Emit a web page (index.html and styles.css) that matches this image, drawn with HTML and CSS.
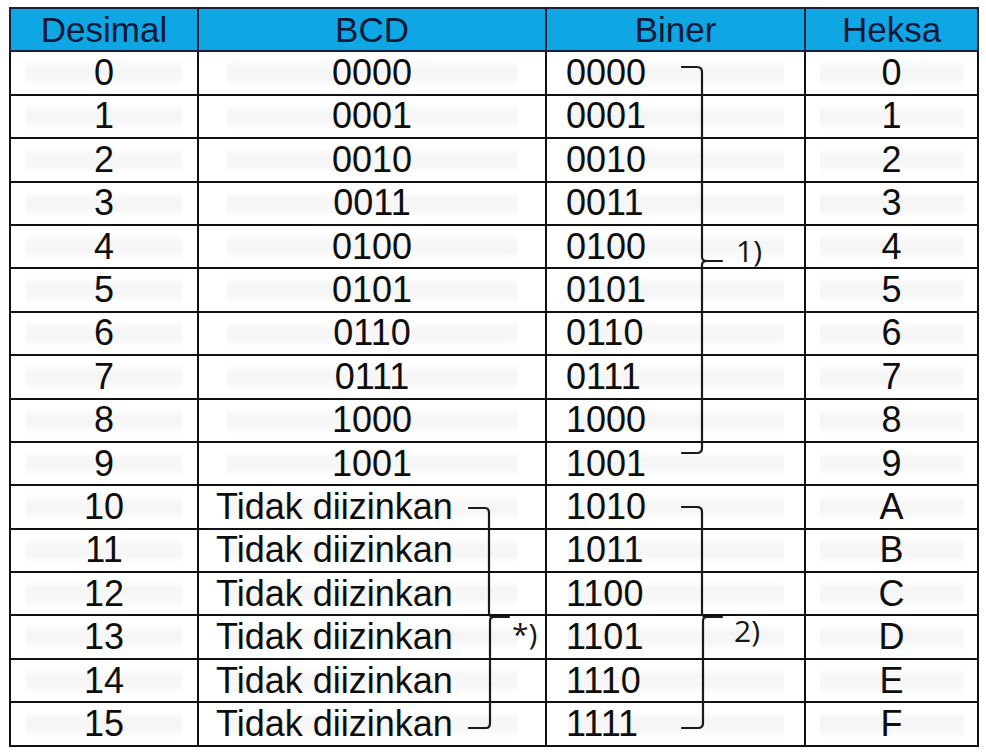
FILE: index.html
```html
<!DOCTYPE html>
<html lang="id">
<head>
<meta charset="utf-8">
<title>Desimal BCD Biner Heksa</title>
<link rel="stylesheet" href="styles.css">
</head>
<body>
<div class="sheet">
  <table class="conv">
    <colgroup>
      <col class="c-dec"><col class="c-bcd"><col class="c-bin"><col class="c-hex">
    </colgroup>
    <thead>
      <tr><th>Desimal</th><th>BCD</th><th>Biner</th><th>Heksa</th></tr>
    </thead>
    <tbody>
      <tr><td>0</td><td>0000</td><td class="bin">0000</td><td>0</td></tr>
      <tr><td>1</td><td>0001</td><td class="bin">0001</td><td>1</td></tr>
      <tr><td>2</td><td>0010</td><td class="bin">0010</td><td>2</td></tr>
      <tr><td>3</td><td>0011</td><td class="bin">0011</td><td>3</td></tr>
      <tr><td>4</td><td>0100</td><td class="bin">0100</td><td>4</td></tr>
      <tr><td>5</td><td>0101</td><td class="bin">0101</td><td>5</td></tr>
      <tr><td>6</td><td>0110</td><td class="bin">0110</td><td>6</td></tr>
      <tr><td>7</td><td>0111</td><td class="bin">0111</td><td>7</td></tr>
      <tr><td>8</td><td>1000</td><td class="bin">1000</td><td>8</td></tr>
      <tr><td>9</td><td>1001</td><td class="bin">1001</td><td>9</td></tr>
      <tr><td>10</td><td class="na">Tidak diizinkan</td><td class="bin">1010</td><td>A</td></tr>
      <tr><td>11</td><td class="na">Tidak diizinkan</td><td class="bin">1011</td><td>B</td></tr>
      <tr><td>12</td><td class="na">Tidak diizinkan</td><td class="bin">1100</td><td>C</td></tr>
      <tr><td>13</td><td class="na">Tidak diizinkan</td><td class="bin">1101</td><td>D</td></tr>
      <tr><td>14</td><td class="na">Tidak diizinkan</td><td class="bin">1110</td><td>E</td></tr>
      <tr><td>15</td><td class="na">Tidak diizinkan</td><td class="bin">1111</td><td>F</td></tr>
    </tbody>
  </table>
  <svg class="braces" width="986" height="754" viewBox="0 0 986 754" aria-hidden="true">
    <g fill="none" stroke="#1a1a1a" stroke-width="2.2" stroke-linecap="round" stroke-linejoin="round">
      <path d="M682 67 L697 67 Q702 67 702 72 L702 257 Q702 261 707 261 L722 261 M707 261 Q702 261 702 265 L702 448 Q702 453 697 453 L682 453"/>
      <path d="M682 507 L697 507 Q702 507 702 512 L702 613 Q702 617 707 617 L722 617 M707 617 Q703 617 703 621 L703 723 Q703 728 698 728 L682 728"/>
      <path d="M469 508 L485 508 Q489 508 489 513 L489 613 Q489 617 494 617 L509 617 M494 617 Q490 617 490 621 L490 723 Q490 728 486 728 L469 728"/>
    </g>
  </svg>
  <span class="note n1">1)</span>
  <span class="note n2">2)</span>
  <span class="note n3">*)</span>
</div>
</body>
</html>
```
FILE: styles.css
```css
html, body {
  margin: 0;
  padding: 0;
  background: #ffffff;
}
body {
  width: 986px;
  height: 754px;
  overflow: hidden;
  font-family: "Liberation Sans", Arial, sans-serif;
}
.sheet {
  position: relative;
  width: 986px;
  height: 754px;
  padding: 7px 0 0 9px;
  box-sizing: border-box;
}
.conv {
  border-collapse: collapse;
  table-layout: fixed;
  width: 968px;
  border: 2.5px solid #111;
}
.c-dec { width: 188px; }
.c-bcd { width: 348px; }
.c-bin { width: 259px; }
.c-hex { width: 173px; }
.conv th,
.conv td {
  border: 2px solid #111;
  height: 41.4px;
  padding: 0;
  font-size: 36px;
  font-weight: normal;
  line-height: 38px;
  text-align: center;
  vertical-align: middle;
  white-space: nowrap;
}
.conv th {
  background: #0fa6e4;
  color: #0c1838;
  border-color: #1a1f3a;
  font-size: 35px;
}
.conv td {
  color: #0e0e0e;
  background:
    linear-gradient(to bottom, rgba(255,255,255,0) 18%, #f6f6f6 40%, #f6f6f6 60%, rgba(255,255,255,0) 84%) no-repeat center / 84% 100%;
}
.conv td.bin {
  text-align: left;
  padding-left: 19px;
}
.conv td.na {
  text-align: left;
  padding-left: 17px;
}
.braces {
  position: absolute;
  left: 0;
  top: 0;
  pointer-events: none;
}
.note {
  position: absolute;
  font-family: "Open Sans", "Liberation Sans", sans-serif;
  font-size: 30px;
  line-height: 1;
  color: #151515;
}
.n1 { left: 736px; top: 236px; }
.n2 { left: 734px; top: 616px; }
.n3 { left: 512px; top: 619px; }
```
